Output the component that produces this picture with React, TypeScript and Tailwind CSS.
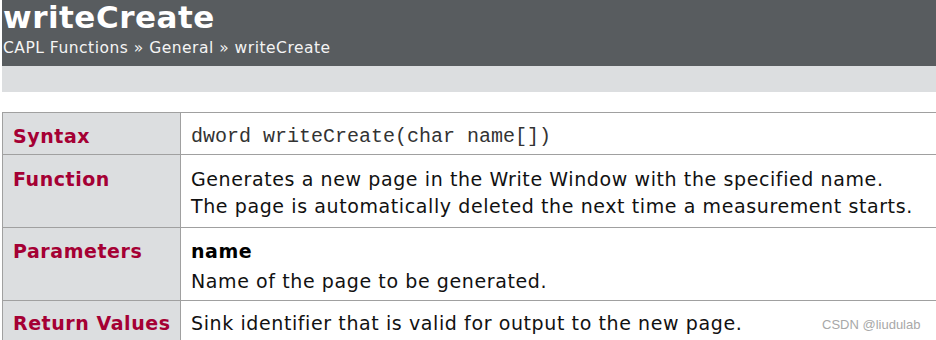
import React from "react";

const sans = { fontFamily: '"DejaVu Sans", Verdana, sans-serif' };

export default function App() {
  return (
    <div className="w-[936px] h-[340px] overflow-hidden bg-white relative" style={sans}>
      <div className="pl-[2px]">
        <div className="h-[66px] bg-[#585c5f] text-white pl-[1px]">
          <div className="text-[31px] font-bold leading-[35px] tracking-[0.5px] whitespace-nowrap">writeCreate</div>
          <div className="text-[15.5px] leading-[20px] mt-[3px] tracking-[0.5px] whitespace-nowrap text-[#f4f4f4]">
            CAPL Functions » General » writeCreate
          </div>
        </div>
        <div className="h-[26px] bg-[#dcdee0]" />
        <div className="h-[20px]" />
        <div className="w-[980px] border-t border-l border-[#a0a0a0] text-[19px] leading-[27px] tracking-[0.6px]">
          <div className="flex h-[42px] border-b border-[#a0a0a0]">
            <div className="w-[178px] shrink-0 bg-[#dcdee0] border-r border-[#a0a0a0] pl-[10px] pt-[10px] font-bold text-[#a50034] tracking-[0.55px]">
              Syntax
            </div>
            <div
              className="pl-[10px] pt-[10px] text-[20px] leading-[27px] tracking-normal text-[#333] whitespace-nowrap"
              style={{ fontFamily: '"Liberation Mono", "Courier New", monospace' }}
            >
              dword writeCreate(char name[])
            </div>
          </div>
          <div className="flex h-[73px] border-b border-[#a0a0a0]">
            <div className="w-[178px] shrink-0 bg-[#dcdee0] border-r border-[#a0a0a0] pl-[10px] pt-[11px] font-bold text-[#a50034] tracking-[0.55px]">
              Function
            </div>
            <div className="pl-[10px] pt-[11px] text-[#111] whitespace-nowrap">
              <div>Generates a new page in the Write Window with the specified name.</div>
              <div>The page is automatically deleted the next time a measurement starts.</div>
            </div>
          </div>
          <div className="flex h-[73px] border-b border-[#a0a0a0]">
            <div className="w-[178px] shrink-0 bg-[#dcdee0] border-r border-[#a0a0a0] pl-[10px] pt-[10px] font-bold text-[#a50034] tracking-[0.55px]">
              Parameters
            </div>
            <div className="pl-[10px] pt-[10px] text-[#111] whitespace-nowrap">
              <div className="font-bold text-black tracking-[0.55px] mb-[3px]">name</div>
              <div>Name of the page to be generated.</div>
            </div>
          </div>
          <div className="flex h-[60px]">
            <div className="w-[178px] shrink-0 bg-[#dcdee0] border-r border-[#a0a0a0] pl-[10px] pt-[9px] font-bold text-[#a50034] tracking-[0.55px] whitespace-nowrap">
              Return Values
            </div>
            <div className="pl-[10px] pt-[9px] text-[#111] whitespace-nowrap">
              Sink identifier that is valid for output to the new page.
            </div>
          </div>
        </div>
      </div>
      <div
        className="absolute left-[822px] top-[317px] text-[13px] leading-[16px] text-[#a8a8a8] whitespace-nowrap"
        style={{ fontFamily: '"Liberation Sans", Arial, sans-serif' }}
      >
        CSDN @liudulab
      </div>
    </div>
  );
}
